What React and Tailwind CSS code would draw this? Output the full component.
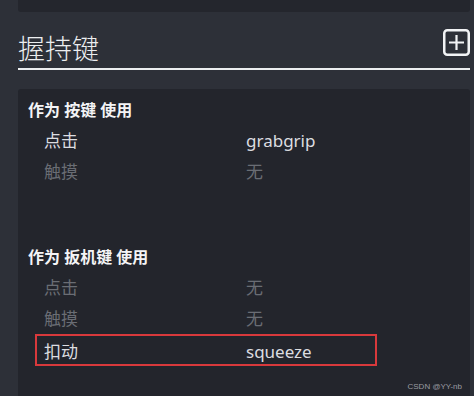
export default function App() {
  const font = { fontFamily: '"Noto Sans", "Noto Sans CJK SC", sans-serif' };

  const Row = ({ label, value, dim }) => (
    <div className={`flex h-[31px] items-center pl-[16px] text-[17px] ${dim ? 'text-[#6a6d74]' : 'text-[#dcdde0]'}`}>
      <span className="w-[202px]">{label}</span>
      <span>{value}</span>
    </div>
  );

  return (
    <div className="flex h-[396px] w-[474px] flex-col overflow-hidden bg-[#2d3038] pl-[18px] pr-[4px]" style={font}>
      <div className="h-[12px] shrink-0 rounded-b-[3px] bg-[#24262d]" />

      <div className="mt-[17px] flex shrink-0 items-end justify-between border-b-2 border-[#eceef0] pb-[2px]">
        <h2 className="text-[27px] leading-[34px] font-light text-[#eceef0]">握持键</h2>
        <svg width="27" height="27" viewBox="0 0 27 27" className="mb-[10px]">
          <rect x="1.25" y="1.25" width="24.5" height="24.5" rx="3" fill="none" stroke="#f2f3f5" strokeWidth="2.5" />
          <path d="M13.5 6v15M6 13.5h15" stroke="#f2f3f5" strokeWidth="2.2" />
        </svg>
      </div>

      <div className="relative mt-[19px] flex-1 rounded-t-[3px] bg-[#23252c] pl-[10px] pt-[5px]">
        <div className="flex h-[31px] items-center text-[16px] font-bold text-[#f4f4f6]">作为 按键 使用</div>
        <Row label="点击" value="grabgrip" />
        <Row label="触摸" value="无" dim />

        <div className="mt-[54px] flex h-[31px] items-center text-[16px] font-bold text-[#f4f4f6]">作为 扳机键 使用</div>
        <Row label="点击" value="无" dim />
        <Row label="触摸" value="无" dim />
        <div className="ml-[7px] flex h-[32px] w-[342px] items-center border-2 border-[#d8393c] pl-[7px] pt-[4px] text-[17px] text-[#dcdde0]">
          <span className="w-[202px]">扣动</span>
          <span>squeeze</span>
        </div>

        <div className="absolute bottom-[4px] right-[8px] text-[8px] leading-[10px] text-[#9a9ca2]" style={{ fontFamily: '"Liberation Sans", sans-serif' }}>
          CSDN @YY-nb
        </div>
      </div>
    </div>
  );
}
